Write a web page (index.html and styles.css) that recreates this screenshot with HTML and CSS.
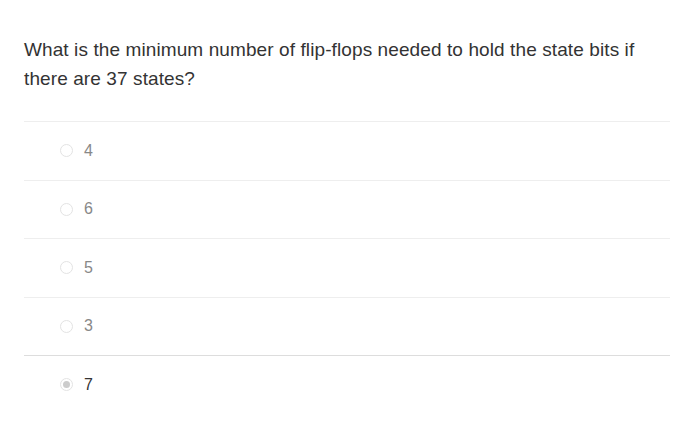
FILE: index.html
```html
<!DOCTYPE html>
<html>
<head>
<meta charset="utf-8">
<link rel="stylesheet" href="styles.css">
</head>
<body>
<div class="quiz">
  <p class="question">What is the minimum number of flip-flops needed to hold the state bits if there are 37 states?</p>
  <div class="options">
    <div class="option"><span class="radio"></span><span class="label">4</span></div>
    <div class="option"><span class="radio"></span><span class="label">6</span></div>
    <div class="option"><span class="radio"></span><span class="label">5</span></div>
    <div class="option"><span class="radio"></span><span class="label">3</span></div>
    <div class="option selected"><span class="radio"></span><span class="label">7</span></div>
  </div>
</div>
</body>
</html>
```

FILE: styles.css
```css
html, body {
  margin: 0;
  padding: 0;
  background: #fff;
}
.quiz {
  padding: 35px 24px 0 24px;
  font-family: "Liberation Sans", Arial, sans-serif;
}
.question {
  margin: 0;
  font-size: 19px;
  line-height: 29px;
  letter-spacing: 0.1px;
  color: #333;
  width: 635px;
}
.options {
  margin-top: 28px;
}
.option {
  display: flex;
  align-items: center;
  height: 58.5px;
  border-top: 1px solid #eee;
  box-sizing: border-box;
  padding-left: 36px;
}
.option.selected {
  border-top-color: #ddd;
}
.radio {
  width: 13px;
  height: 13px;
  border: 1px solid #e3e3e3;
  border-radius: 50%;
  box-sizing: border-box;
  margin-right: 11px;
  display: flex;
  align-items: center;
  justify-content: center;
}
.selected .radio::after {
  content: "";
  width: 7px;
  height: 7px;
  border-radius: 50%;
  background: #ccc;
}
.label {
  font-size: 16px;
  color: #888;
}
.selected .label {
  color: #333;
}
```
